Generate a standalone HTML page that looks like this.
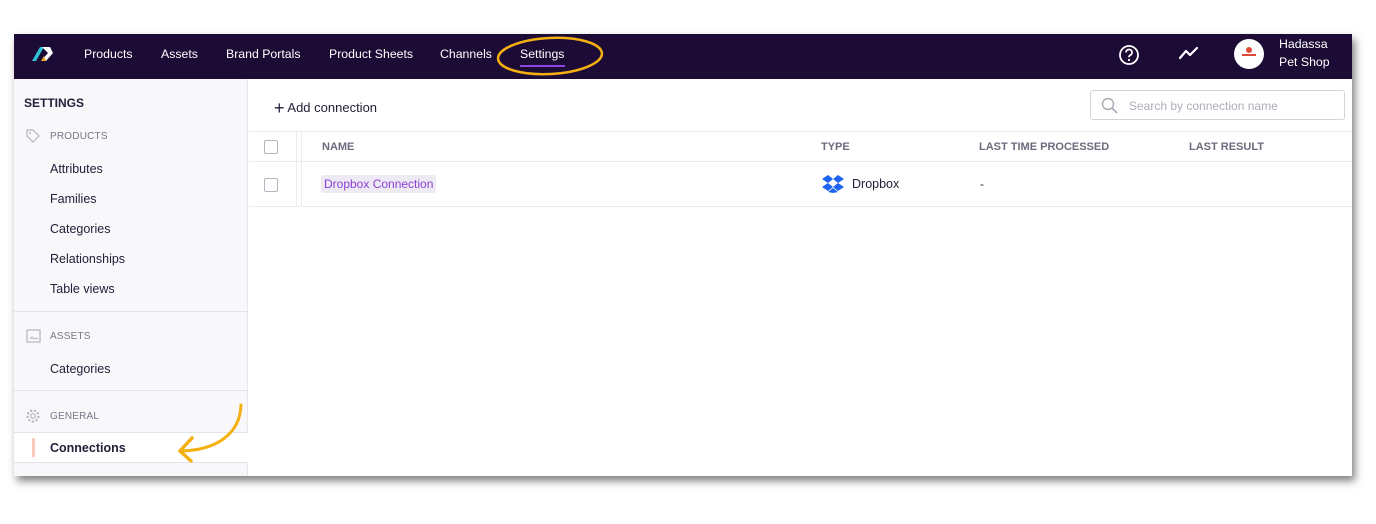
<!DOCTYPE html>
<html><head><style>
*{box-sizing:border-box;margin:0;padding:0}
body{width:1376px;height:524px;background:#fff;font-family:"Liberation Sans",sans-serif;position:relative;overflow:hidden}
.app{position:absolute;left:14px;top:34px;width:1338px;height:442px;background:#fff;box-shadow:3px 5px 8px rgba(0,0,0,.5);overflow:hidden}
.nav{position:absolute;left:0;top:0;width:1338px;height:45px;background:#1b0b35;color:#fff;font-size:12.3px}
.nav span{position:absolute;top:13px}
.side{position:absolute;left:0;top:45px;width:234px;height:397px;background:#f8f8fa;border-right:1px solid #e6e6ea}
.t{position:absolute;font-size:12.5px;color:#22203a}
.sec{position:absolute;font-size:10px;color:#7a7788;letter-spacing:.2px}
.hr{position:absolute;left:0;width:234px;height:1px;background:#e3e3e8}
.main .h{position:absolute;font-size:11px;font-weight:bold;color:#6c6a7c}
.line{position:absolute;height:1px;background:#ececf0}
.cb{position:absolute;width:14px;height:14px;border:1.5px solid #b6b5bf;border-radius:2px;background:#fff}
</style></head><body>
<div class="app">
 <div class="nav">
  <svg style="position:absolute;left:18px;top:10px" width="22" height="18" viewBox="0 0 22 18"><path d="M0 17 L8 3 L12 3 L4 17Z" fill="#2ec4d6"/><path d="M10 3 L18 3 L21 9 L14 17 L9 17 L16 9Z" fill="#fff"/><path d="M9 17 L12 12 L14 17Z" fill="#f5a623"/></svg>
  <span style="left:70px">Products</span><span style="left:147px">Assets</span><span style="left:212px">Brand Portals</span><span style="left:315px">Product Sheets</span><span style="left:426px">Channels</span><span style="left:506px">Settings</span>
  <div style="position:absolute;left:506px;top:31px;width:45px;height:2px;background:#8e44e0"></div>
  <svg style="position:absolute;left:1104px;top:10px" width="22" height="22" viewBox="0 0 22 22"><circle cx="11" cy="11" r="9" fill="none" stroke="#fff" stroke-width="1.8"/><path d="M8 8.5a3 3 0 1 1 4 2.8c-.8.4-1 1-1 2" fill="none" stroke="#fff" stroke-width="1.8"/><circle cx="11" cy="16" r="1.1" fill="#fff"/></svg>
  <svg style="position:absolute;left:1164px;top:11px" width="22" height="16" viewBox="0 0 22 16"><path d="M2 13 L8 6 L12 10 L19 3" fill="none" stroke="#fff" stroke-width="2.2" stroke-linecap="round" stroke-linejoin="round"/></svg>
  <div style="position:absolute;left:1220px;top:5px;width:30px;height:30px;border-radius:50%;background:#fff"><div style="position:absolute;left:12px;top:8px;width:6px;height:6px;border-radius:50%;background:#e04a3a"></div><div style="position:absolute;left:8px;top:15px;width:14px;height:2px;background:#e04a3a"></div></div>
  <span style="left:1265px;top:3px">Hadassa</span><span style="left:1265px;top:21px">Pet Shop</span>
 </div>
 <div class="side">
  <div class="t" style="left:10px;top:17px;font-weight:bold;font-size:12px">SETTINGS</div>
  <svg style="position:absolute;left:11px;top:49px" width="16" height="16" viewBox="0 0 16 16"><path d="M2 2h6l6 6-6 6-6-6z" fill="none" stroke="#b5b4bd" stroke-width="1.2"/><circle cx="5" cy="5" r="1" fill="#b5b4bd"/></svg>
  <div class="sec" style="left:36px;top:52px">PRODUCTS</div>
  <div class="t" style="left:36px;top:83px">Attributes</div>
  <div class="t" style="left:36px;top:113px">Families</div>
  <div class="t" style="left:36px;top:143px">Categories</div>
  <div class="t" style="left:36px;top:173px">Relationships</div>
  <div class="t" style="left:36px;top:203px">Table views</div>
  <div class="hr" style="top:232px"></div>
  <svg style="position:absolute;left:12px;top:250px" width="15" height="14" viewBox="0 0 15 14"><rect x="1" y="1" width="13" height="12" fill="none" stroke="#b5b4bd" stroke-width="1.2"/><path d="M4 10l2-2 2 2 2-1 2 1" fill="none" stroke="#b5b4bd"/></svg>
  <div class="sec" style="left:36px;top:252px">ASSETS</div>
  <div class="t" style="left:36px;top:283px">Categories</div>
  <div class="hr" style="top:311px"></div>
  <svg style="position:absolute;left:11px;top:329px" width="16" height="16" viewBox="0 0 16 16"><circle cx="8" cy="8" r="5.5" fill="none" stroke="#b5b4bd" stroke-width="2" stroke-dasharray="2.2 1.6"/><circle cx="8" cy="8" r="2.3" fill="none" stroke="#b5b4bd" stroke-width="1.2"/></svg>
  <div class="sec" style="left:36px;top:332px">GENERAL</div>
  <div class="hr" style="top:353px"></div>
  <div style="position:absolute;left:0;top:354px;width:234px;height:29px;background:#fff"></div>
  <div style="position:absolute;left:18px;top:359px;width:3px;height:19px;background:#f9c9bd"></div>
  <div class="t" style="left:36px;top:362px;font-weight:bold">Connections</div>
  <div class="hr" style="top:383px"></div>
 </div>
 <div class="main">
  <div style="position:absolute;left:260px;top:62px;font-size:13px;color:#22203a"><span style="font-size:18px;position:relative;top:2px">+</span> Add connection</div>
  <div style="position:absolute;left:1076px;top:56px;width:255px;height:30px;border:1px solid #d4d3db;border-radius:3px">
   <svg style="position:absolute;left:10px;top:6px" width="18" height="18" viewBox="0 0 18 18"><circle cx="7" cy="7" r="5.5" fill="none" stroke="#a9a8b2" stroke-width="1.4"/><path d="M11 11l5 5" stroke="#a9a8b2" stroke-width="1.6"/></svg>
   <span style="position:absolute;left:38px;top:8px;font-size:12px;color:#aeadb8">Search by connection name</span>
  </div>
  <div class="line" style="left:235px;top:97px;width:1103px"></div>
  <div class="line" style="left:235px;top:127px;width:1103px"></div>
  <div class="line" style="left:235px;top:172px;width:1103px"></div>
  <div style="position:absolute;left:282px;top:98px;width:1px;height:74px;background:#ececf0"></div>
  <div style="position:absolute;left:287px;top:98px;width:1px;height:74px;background:#ececf0"></div>
  <div class="cb" style="left:250px;top:106px"></div>
  <div class="cb" style="left:250px;top:144px"></div>
  <div class="h" style="left:308px;top:107px">NAME</div>
  <div class="h" style="left:807px;top:107px">TYPE</div>
  <div class="h" style="left:965px;top:107px">LAST TIME PROCESSED</div>
  <div class="h" style="left:1175px;top:107px">LAST RESULT</div>
  <div style="position:absolute;left:307px;top:141px;padding:2px 3px;background:#eeeaf4;border-radius:2px;font-size:12px;color:#8a3fd6">Dropbox Connection</div>
  <svg style="position:absolute;left:808px;top:141px" width="22" height="18" viewBox="0 0 22 18"><path d="M6 0L0 4l6 4 5-4zM16 0l-5 4 5 4 6-4zM0 12l6 4 5-4-5-4zM16 8l-5 4 5 4 6-4zM6 17l5 1 5-1-5-4z" fill="#1e63f0"/></svg>
  <div style="position:absolute;left:838px;top:143px;font-size:12.5px;color:#22203a">Dropbox</div>
  <div style="position:absolute;left:966px;top:143px;font-size:12px;color:#22203a">-</div>
 </div>
</div>
<svg style="position:absolute;left:0;top:0" width="1376" height="524" viewBox="0 0 1376 524">
 <ellipse cx="550" cy="56" rx="52" ry="18" fill="none" stroke="#f4b010" stroke-width="2.5" transform="rotate(-3 550 56)"/>
 <path d="M241 405 C240 435 215 450 182 451" fill="none" stroke="#f4b010" stroke-width="3" stroke-linecap="round"/>
 <path d="M192 438 L180 451 L191 461" fill="none" stroke="#f4b010" stroke-width="3.5" stroke-linecap="round" stroke-linejoin="round"/>
</svg>
</body></html>
